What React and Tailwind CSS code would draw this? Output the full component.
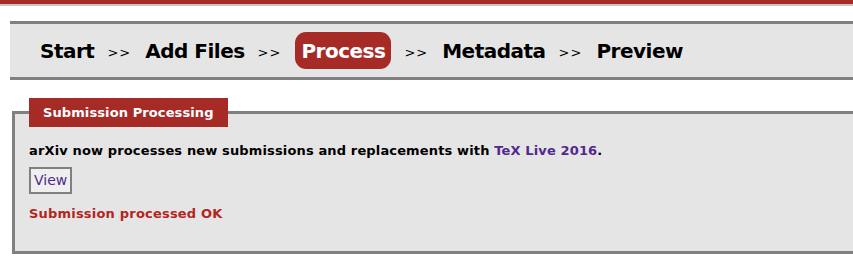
import React from 'react';

const steps = ['Start', 'Add Files', 'Process', 'Metadata', 'Preview'];

const App = () => {
  return (
    <div className="min-h-screen bg-white overflow-hidden" style={{ fontFamily: '"DejaVu Sans", "Noto Sans", sans-serif' }}>
      {/* top stripe */}
      <div className="h-[4px] bg-[#a62b27]" />
      <div className="h-[2px] bg-[#c9c6c6]" />

      {/* step bar */}
      <div className="mt-[15px] ml-[10px] border-y-[3px] border-[#808080] bg-[#e5e5e5] h-[59px] flex items-center pl-[30px]">
        {steps.map((step, i) => (
          <React.Fragment key={step}>
            {i > 0 && <span className="text-[13px] text-black ml-[13px] mr-[14px] mt-[5px] tracking-[1px]">&gt;&gt;</span>}
            {step === 'Process' ? (
              <span className="bg-[#a62b27] text-white font-bold text-[20px] rounded-[11px] px-[6px] h-[37px] flex items-center tracking-[-0.5px]">
                {step}
              </span>
            ) : (
              <span className="text-black font-bold text-[20px] tracking-[-0.5px]">{step}</span>
            )}
          </React.Fragment>
        ))}
      </div>

      {/* processing box */}
      <fieldset className="mt-[18px] ml-[12px] border-[3px] border-r-0 border-[#808080] bg-[#e5e5e5] h-[156px] px-[14px]">
        <legend className="bg-[#a62b27] text-white font-bold text-[13px] tracking-[0.1px] h-[29px] px-[14px] flex items-center">
          Submission Processing
        </legend>
        <p className="font-bold text-[13px] tracking-[0.14px] text-black mt-[14px]">
          arXiv now processes new submissions and replacements with{' '}
          <a href="#" className="text-[#52288f]">TeX Live 2016</a>.
        </p>
        <button className="mt-[6px] border-2 border-[#808080] bg-[#efefef] text-[#52288f] text-[14px] px-[3px] h-[27px] flex items-center">
          View
        </button>
        <p className="font-bold text-[13px] tracking-[0.2px] text-[#b3261e] mt-[10px]">Submission processed OK</p>
      </fieldset>
    </div>
  );
};

export default App;
